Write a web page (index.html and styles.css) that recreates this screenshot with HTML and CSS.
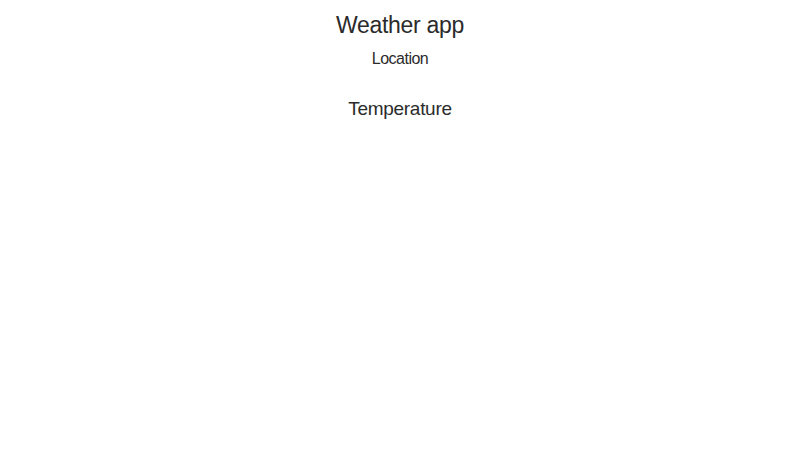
FILE: index.html
```html
<!DOCTYPE html>
<html lang="en">
<head>
<meta charset="utf-8">
<title>Weather app</title>
<link rel="stylesheet" href="styles.css">
</head>
<body>
  <main class="weather">
    <h1 class="weather__title">Weather app</h1>
    <p class="weather__location">Location</p>
    <p class="weather__temp">Temperature</p>
  </main>
</body>
</html>
```

FILE: styles.css
```css
html, body {
  margin: 0;
  padding: 0;
  background: #ffffff;
}

body {
  font-family: "Liberation Sans", Arial, sans-serif;
  color: #2b2b2b;
}

.weather {
  display: flex;
  flex-direction: column;
  align-items: center;
  padding-top: 11px;
}

.weather__title {
  margin: 0;
  font-size: 23px;
  font-weight: 400;
  line-height: 28px;
  letter-spacing: -0.3px;
}

.weather__location {
  margin: 10px 0 0;
  font-size: 16px;
  line-height: 20px;
  letter-spacing: -0.5px;
}

.weather__temp {
  margin: 28px 0 0;
  font-size: 19px;
  line-height: 24px;
  letter-spacing: -0.3px;
}
```
